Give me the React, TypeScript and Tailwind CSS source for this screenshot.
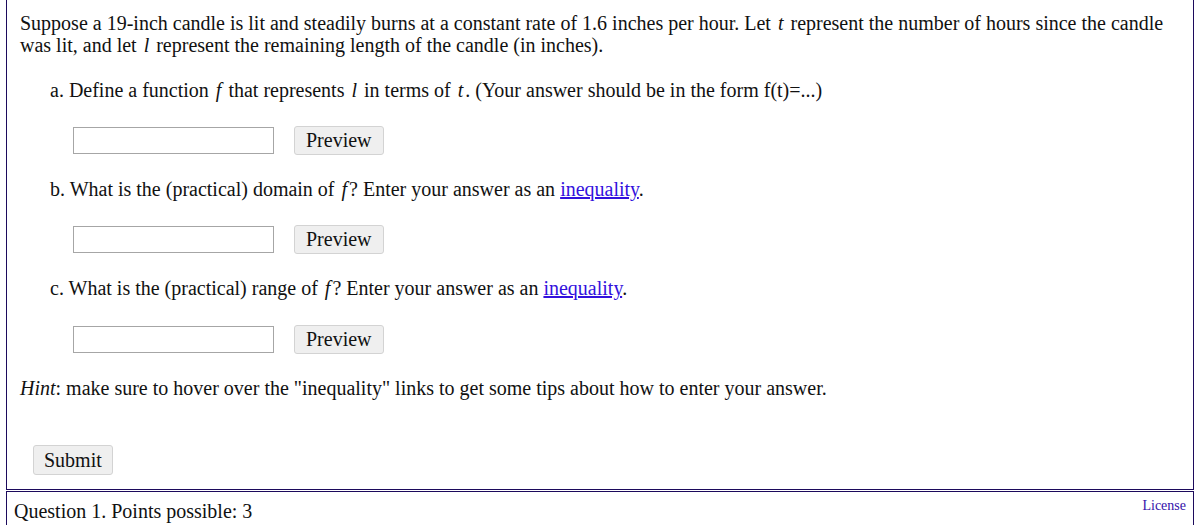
import React from "react";

const serif = "font-['Liberation_Serif','Times_New_Roman',serif]";

function Answer() {
  return (
    <div className="flex items-center pl-[66px] gap-[20px] h-[28px]">
      <input
        type="text"
        className="w-[201px] h-[27px] border border-[#a6a6a6] bg-white"
      />
      <button className="h-[29px] px-[11px] border border-[#d3d3d3] bg-[#efefef] rounded-[3px] text-[20px] leading-none text-[#111]">
        Preview
      </button>
    </div>
  );
}

function Ineq() {
  return <a href="#" className="text-[#3311dd] underline">inequality</a>;
}

function V({ c }: { c: string }) {
  return <i className="px-[2px]">{c}</i>;
}

export default function App() {
  return (
    <div className={`${serif} text-[20px] text-[#111] bg-white min-h-[525px] overflow-hidden`}>
      <div className="ml-[6px] w-[1188px] border border-[#1c0a5c] -mt-[2px] pt-[13px] pb-[14px]">
        <p className="pl-[13px] pr-[20px] leading-[22px]">
          Suppose a 19-inch candle is lit and steadily burns at a constant rate of 1.6 inches per hour. Let <V c="t" /> represent the
          number of hours since the candle was lit, and let <V c="l" /> represent the remaining length of the candle (in inches).
        </p>
        <div className="pl-[43px] mt-[23px] leading-[22px]">
          a. Define a function <V c="f" /> that represents <V c="l" /> in terms of <V c="t" />. (Your answer should be in the form f(t)=...)
        </div>
        <div className="mt-[25px]"><Answer /></div>
        <div className="pl-[43px] mt-[24px] leading-[22px]">
          b. What is the (practical) domain of <V c="f" />? Enter your answer as an <Ineq />.
        </div>
        <div className="mt-[25px]"><Answer /></div>
        <div className="pl-[43px] mt-[24px] leading-[22px]">
          c. What is the (practical) range of <V c="f" />? Enter your answer as an <Ineq />.
        </div>
        <div className="mt-[26px]"><Answer /></div>
        <p className="pl-[13px] mt-[24px] leading-[22px]">
          <i>Hint</i>: make sure to hover over the "inequality" links to get some tips about how to enter your answer.
        </p>
        <div className="pl-[26px] mt-[46px]">
          <button className="h-[30px] px-[10px] border border-[#d3d3d3] bg-[#efefef] rounded-[3px] text-[20px] leading-none text-[#111]">
            Submit
          </button>
        </div>
      </div>
      <div className="ml-[6px] w-[1188px] mt-[1px] border border-[#1c0a5c] h-[40px] flex justify-between pl-[7px] pr-[7px]">
        <span className="pt-[8px] leading-[22px]">Question 1. Points possible: 3</span>
        <a href="#" className="text-[14px] text-[#3311aa] pt-[6px] leading-[16px]">License</a>
      </div>
    </div>
  );
}
